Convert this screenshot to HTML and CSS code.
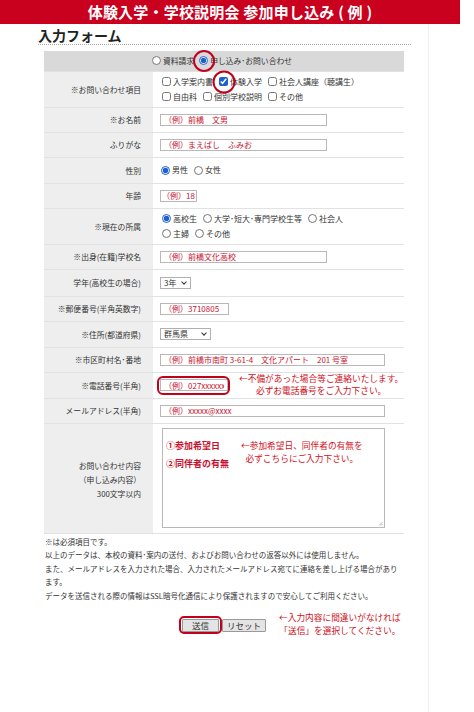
FILE: index.html
```html
<!DOCTYPE html>
<html lang="ja">
<head>
<meta charset="utf-8">
<title>体験入学・学校説明会 参加申し込み（例）</title>
<link rel="stylesheet" href="styles.css">
</head>
<body>
<header class="band"><h1 class="title">体験入学・学校説明会 参加申し込み ( 例 )</h1></header>
<div class="page">
  <h2 class="heading">入力フォーム</h2>
  <table class="form">
    <tr class="h20">
      <td class="top" colspan="2">
        <div class="toprow">
          <label class="opt"><input type="radio" name="kind">資料請求</label>
          <label class="opt"><span class="ring ring-radio"><input type="radio" name="kind" checked></span>申し込み･お問い合わせ</label>
        </div>
      </td>
    </tr>
    <tr class="h35">
      <td class="label">※お問い合わせ項目</td>
      <td class="value">
        <div class="lines">
          <div class="line">
            <label class="opt"><input type="checkbox">入学案内書</label>
            <label class="opt"><span class="ring ring-check"><input type="checkbox" checked></span>体験入学</label>
            <label class="opt"><input type="checkbox">社会人講座（聴講生）</label>
          </div>
          <div class="line">
            <label class="opt"><input type="checkbox">自由科</label>
            <label class="opt"><input type="checkbox">個別学校説明</label>
            <label class="opt"><input type="checkbox">その他</label>
          </div>
        </div>
      </td>
    </tr>
    <tr class="h25">
      <td class="label">※お名前</td>
      <td class="value"><input class="field w-name" type="text" value="（例）前橋　文男"></td>
    </tr>
    <tr class="h25">
      <td class="label">ふりがな</td>
      <td class="value"><input class="field w-name" type="text" value="（例）まえばし　ふみお"></td>
    </tr>
    <tr class="h26">
      <td class="label">性別</td>
      <td class="value">
        <div class="line">
          <label class="opt"><input type="radio" name="sex" checked>男性</label>
          <label class="opt"><input type="radio" name="sex">女性</label>
        </div>
      </td>
    </tr>
    <tr class="h25">
      <td class="label">年齢</td>
      <td class="value"><input class="field w-age" type="text" value="（例）18"></td>
    </tr>
    <tr class="h35">
      <td class="label">※現在の所属</td>
      <td class="value">
        <div class="lines">
          <div class="line">
            <label class="opt"><input type="radio" name="aff" checked>高校生</label>
            <label class="opt"><input type="radio" name="aff">大学･短大･専門学校生等</label>
            <label class="opt"><input type="radio" name="aff">社会人</label>
          </div>
          <div class="line">
            <label class="opt"><input type="radio" name="aff">主婦</label>
            <label class="opt"><input type="radio" name="aff">その他</label>
          </div>
        </div>
      </td>
    </tr>
    <tr class="h25">
      <td class="label">※出身(在籍)学校名</td>
      <td class="value"><input class="field w-name" type="text" value="（例）前橋文化高校"></td>
    </tr>
    <tr class="h27">
      <td class="label">学年(高校生の場合)</td>
      <td class="value"><span class="sel w-grade"><select><option>3年</option></select></span></td>
    </tr>
    <tr class="h25">
      <td class="label">※郵便番号(半角英数字)</td>
      <td class="value"><input class="field w-zip" type="text" value="（例）3710805"></td>
    </tr>
    <tr class="h26">
      <td class="label">※住所(都道府県)</td>
      <td class="value"><span class="sel w-pref"><select><option>群馬県</option></select></span></td>
    </tr>
    <tr class="h25">
      <td class="label">※市区町村名･番地</td>
      <td class="value"><input class="field w-wide" type="text" value="（例）前橋市南町 3-61-4　文化アパート　201 号室"></td>
    </tr>
    <tr class="h26">
      <td class="label">※電話番号(半角)</td>
      <td class="value">
        <div class="withnote">
          <span class="ring-box"><input class="field w-tel" type="text" value="（例）027xxxxxxx"></span>
          <p class="note">←不備があった場合等ご連絡いたします。<br>必ずお電話番号をご入力下さい。</p>
        </div>
      </td>
    </tr>
    <tr class="h25">
      <td class="label">メールアドレス(半角)</td>
      <td class="value"><input class="field w-wide" type="text" value="（例）xxxxx@xxxx"></td>
    </tr>
    <tr class="h108">
      <td class="label multi">お問い合わせ内容<br>（申し込み内容）<br>300文字以内</td>
      <td class="value">
        <div class="textbox">
          <div class="tb-items">
            <p class="tb-item">①参加希望日</p>
            <p class="tb-item">②同伴者の有無</p>
          </div>
          <p class="note tb-note">←参加希望日、同伴者の有無を<br>必ずこちらにご入力下さい。</p>
          <svg class="grip" width="5" height="5" viewBox="0 0 5 5"><path d="M4.5 1 L1 4.5 M4.5 3 L3 4.5" stroke="#999" stroke-width="0.7" fill="none"/></svg>
        </div>
      </td>
    </tr>
  </table>
  <div class="notes">
    <p>※は必須項目です。</p>
    <p>以上のデータは、本校の資料･案内の送付、およびお問い合わせの返答以外には使用しません。</p>
    <p>また、メールアドレスを入力された場合、入力されたメールアドレス宛てに連絡を差し上げる場合があり<br>ます。</p>
    <p>データを送信される際の情報はSSL暗号化通信により保護されますので安心してご利用ください。</p>
  </div>
  <div class="actions">
    <span class="ring-btn"><button class="btn btn-send" type="button">送信</button></span>
    <button class="btn btn-reset" type="button">リセット</button>
    <p class="note act-note">←入力内容に間違いがなければ<br>「送信」を選択してください。</p>
  </div>
</div>
</body>
</html>
```

FILE: styles.css
```css
* { box-sizing: border-box; }
html, body { margin: 0; padding: 0; background: #ffffff; }
body {
  font-family: "Noto Sans CJK JP", "Noto Sans", "Liberation Sans", sans-serif;
  color: #333333;
  width: 474px;
  height: 712px;
  overflow: hidden;
}
p { margin: 0; }

.band {
  width: 460px;
  height: 24px;
  background: #c9001e;
}
.title {
  margin: 0;
  color: #ffffff;
  font-size: 15px;
  font-weight: 700;
  line-height: 24px;
  text-align: center;
  letter-spacing: 0.2px;
}

.page {
  width: 429px;
  height: 688px;
  padding-left: 38px;
  border-right: 1px solid #f0f0f0;
}
.heading {
  margin: 0;
  width: 373px;
  padding-top: 3px;
  font-size: 14px;
  line-height: 17px;
  font-weight: 700;
  color: #222222;
  border-bottom: 1px dotted #aaaaaa;
}

.form {
  margin: 6px 0 0 6px;
  width: 360px;
  border-collapse: collapse;
  font-size: 7.8px;
}
.form td {
  padding: 0;
  border-bottom: 1px solid #e2e2e2;
  vertical-align: middle;
}
.h20 td { height: 20px; }
.h25 td { height: 25px; }
.h26 td { height: 26px; }
.h27 td { height: 27px; }
.h35 td { height: 36px; }
.h108 td { height: 110px; }

.top {
  background: #d9d9d9;
}
.toprow {
  display: flex;
  justify-content: center;
  gap: 5px;
  font-size: 7.8px;
  padding-right: 4px;
}
.label {
  width: 109px;
  background: #eeeeee;
  text-align: right;
  padding-right: 12px !important;
  color: #333333;
  white-space: nowrap;
}
.label.multi {
  line-height: 14px;
  padding-top: 4px !important;
}
.value {
  padding-left: 7px !important;
  background: #ffffff;
}

.lines { display: flex; flex-direction: column; gap: 5px; padding-left: 1px; }
.line { display: flex; gap: 6px; align-items: center; padding-left: 1px; line-height: 10px; font-size: 8px; }
.opt { display: inline-flex; align-items: center; white-space: nowrap; color: #333333; }
.opt input {
  width: 9px;
  height: 9px;
  margin: 0 2px 0 0;
  accent-color: #1f5fcf;
}

.ring { position: relative; display: inline-flex; }
.ring::after {
  content: "";
  position: absolute;
  left: 50%;
  top: 50%;
  border: 2px solid #c2001b;
  border-radius: 50%;
  transform: translate(-50%, -50%);
}
.ring-radio::after { width: 18px; height: 18px; margin-left: -1px; }
.ring-check::after { width: 19px; height: 19px; margin-left: -1px; }

.field {
  display: block;
  height: 12px;
  border: 1px solid #b8b8b8;
  border-radius: 0;
  padding: 0 3px;
  font-family: inherit;
  font-size: 8px;
  line-height: 10px;
  color: #c8102e;
  background: #ffffff;
  outline: none;
}
.w-name { width: 167px; }
.w-age { width: 37px; padding: 0 1px; }
.w-zip { width: 69px; }
.w-tel { width: 68px; }
.w-wide { width: 225px; }

.sel { position: relative; display: inline-block; }
.sel select {
  appearance: none;
  -webkit-appearance: none;
  display: block;
  width: 100%;
  height: 12px;
  border: 1px solid #b0b0b0;
  border-radius: 0;
  padding: 0 0 0 3px;
  font-family: inherit;
  font-size: 8px;
  line-height: 10px;
  color: #333333;
  background: #ffffff;
}
.sel::after {
  content: "";
  position: absolute;
  right: 5px;
  top: 3px;
  width: 3px;
  height: 3px;
  border-right: 1.2px solid #333333;
  border-bottom: 1.2px solid #333333;
  transform: rotate(45deg);
}
.w-grade { width: 31px; }
.w-pref { width: 51px; }

.withnote { display: flex; align-items: center; gap: 11px; }
.ring-box { position: relative; display: block; }
.ring-box::after {
  content: "";
  position: absolute;
  left: -3px;
  right: -2px;
  top: -3px;
  bottom: -4px;
  border: 2px solid #c2001b;
  border-radius: 6px;
}
.note {
  color: #d0101b;
  font-size: 8.7px;
  line-height: 12.7px;
  text-align: center;
  white-space: nowrap;
}

.textbox {
  position: relative;
  margin-left: 2px;
  width: 223px;
  height: 100px;
  border: 1px solid #b8b8b8;
  display: flex;
  align-items: flex-start;
  gap: 12px;
  padding: 12px 0 0 3px;
}
.tb-items { display: flex; flex-direction: column; gap: 8px; }
.tb-item {
  color: #c8102e;
  font-weight: 700;
  font-size: 9px;
  line-height: 10px;
  white-space: nowrap;
}
.tb-note { margin-top: -1px; }
.grip { position: absolute; right: 1px; bottom: 1px; }

.notes {
  margin: 1px 0 0 7px;
  font-size: 7.5px;
  line-height: 13.5px;
  color: #333333;
  white-space: nowrap;
}

.actions {
  display: flex;
  align-items: center;
  margin: 10px 0 0 144px;
}
.ring-btn { position: relative; display: inline-block; }
.ring-btn::after {
  content: "";
  position: absolute;
  left: -3px;
  right: -3px;
  top: -3px;
  bottom: -2px;
  border: 2px solid #c2001b;
  border-radius: 5px;
}
.btn {
  display: block;
  height: 13px;
  padding: 0;
  border: 1px solid #9a9a9a;
  border-radius: 1px;
  background: #e4e4e4;
  font-family: inherit;
  font-size: 8.5px;
  line-height: 11px;
  color: #333333;
}
.btn-send { width: 37px; }
.btn-reset { width: 44px; margin-left: 3px; }
.act-note { margin-left: 13px; }
```
